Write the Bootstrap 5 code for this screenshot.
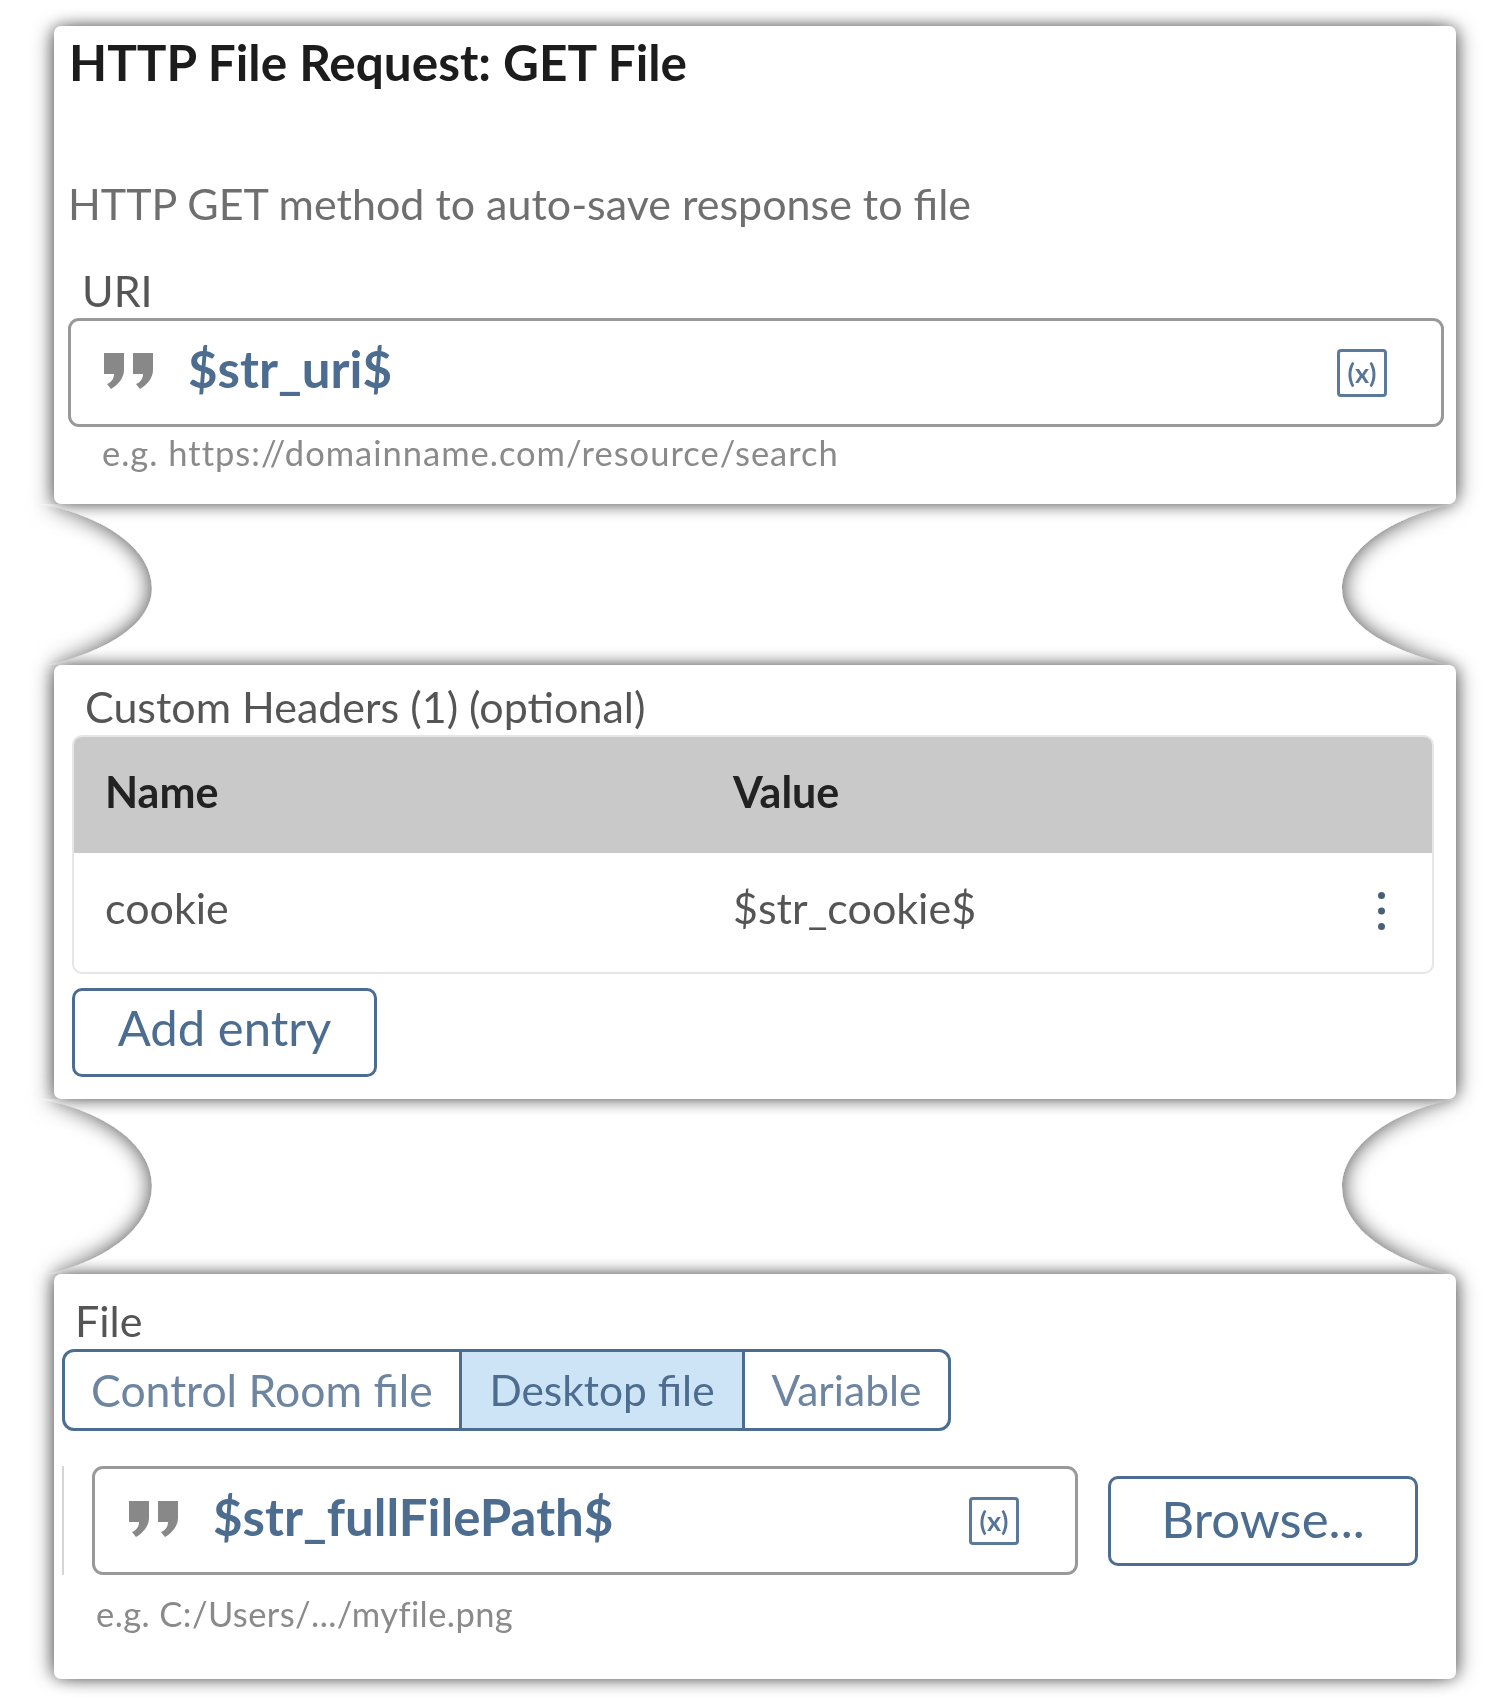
<!DOCTYPE html>
<html lang="en">
<head>
<meta charset="utf-8">
<title>HTTP File Request</title>
<link href="https://cdn.jsdelivr.net/npm/bootstrap@5.3.0/dist/css/bootstrap.min.css" rel="stylesheet">
<style>
html,body{background:#fff;margin:0}
body{font-family:Lato,"Open Sans",sans-serif;padding-top:26px;height:1703px;overflow:hidden;color:#555}
.sheet{position:relative;z-index:2;background:#fff;margin-left:54px;width:1402px;border-radius:7px;box-shadow:0 0 14px rgba(0,0,0,.24),7px 0 20px -4px rgba(0,0,0,.46),-7px 0 20px -4px rgba(0,0,0,.46)}
.sheet>*{filter:blur(.45px)}
.sheet-a{height:478px;padding:10px 12px 0 14px}
.sheet-b{height:434px;padding:19px 22px 0 18px}
.sheet-c{height:405px;padding:24px 38px 0 8px}
.tear{display:block;width:1494px;height:161px;overflow:visible;position:relative;z-index:1}
.ttl{font-size:49.5px;line-height:52px;font-weight:700;color:#1c1c1c;margin:0 0 0 1px}
.sub{font-size:43px;line-height:46px;color:#6f6f6f;margin:93px 0 0;font-weight:400}
.lbl{font-size:43px;line-height:46px;color:#555;margin:0}
.fld{height:109px;border:3px solid #999;border-radius:11px;background:#fff}
.val{font-size:51px;font-weight:700;color:#4d6d90;line-height:56px;padding-bottom:8px}
.qmark{width:50px;height:36px;fill:#888;flex:none;margin-top:-4px}
.xbox{width:50px;height:48px;border:3px solid #5b7a9b;border-radius:4px;font-size:27px;font-weight:700;color:#567596;line-height:1;flex:none}
.hint{font-size:34.5px;line-height:40px;color:#8a8a8a;margin:0}
.hint-a{letter-spacing:1px}
.hint-b{letter-spacing:.42px}
.grid-wrap{border:2px solid #e6e6e6;border-radius:10px;overflow:hidden;height:239px}
.grid-wrap .table{--bs-table-bg:transparent;margin:0;font-size:43px;table-layout:fixed}
.grid-wrap th{background:#c9c9c9;color:#222;font-weight:700;height:116px;padding:0 0 6px 31px;vertical-align:middle;border:0}
.grid-wrap td{color:#555;height:119px;padding:0 0 8px 31px;vertical-align:middle;border:0}
.col-nm{width:628px}
.col-end{width:110px}
.dots{width:7px;height:38px;fill:#4a5f78;display:block;margin-left:25px;margin-top:4px}
.btn-line{--bs-btn-color:#4d6d90;--bs-btn-border-color:#4d6d90;--bs-btn-border-width:3px;--bs-btn-padding-x:0;--bs-btn-padding-y:0;--bs-btn-border-radius:10px;--bs-btn-line-height:1;background:#fff;color:#4d6d90;display:flex;align-items:center;justify-content:center}
.btn-add{width:305px;height:89px;font-size:49px;padding-bottom:10px}
.btn-browse{width:310px;height:90px;font-size:51px;padding-bottom:4px}
.seg{height:82px;border:3px solid #4d6d90;border-radius:12px;overflow:hidden;width:889px;font-size:42.5px;color:#6d85a0}
.seg-it{height:100%;border-right:3px solid #4d6d90;display:flex;align-items:center;justify-content:center}
.seg-it:last-child{border-right:0}
.seg-a{width:397px;font-size:44.5px}
.seg-b{width:283px;background:#cde4f6;color:#4d6d90}
.seg-c{flex:1}
.rail{border-left:2px solid #d5d5d5;height:109px;padding-left:28px}
</style>
</head>
<body>
<section class="sheet sheet-a">
  <h1 class="ttl">HTTP File Request: GET File</h1>
  <p class="sub">HTTP GET method to auto-save response to file</p>
  <p class="lbl" style="padding-left:14px;margin-top:41px;margin-bottom:4px">URI</p>
  <div class="fld d-flex align-items-center" style="padding:0 54px 0 33px">
    <svg class="qmark" viewBox="0 0 50 36"><path d="M0 0H20V17C20 25 14 32 7 36L3 31C8 29 10 25 10 21H0Z"/><path d="M29 0H49V17C49 25 43 32 36 36L32 31C37 29 39 25 39 21H29Z"/></svg>
    <span class="val flex-grow-1" style="padding-left:34px">$str_uri$</span>
    <span class="xbox d-flex align-items-center justify-content-center">(x)</span>
  </div>
  <p class="hint hint-a" style="padding-left:34px;margin-top:6px">e.g. https://domainname.com/resource/search</p>
</section>

<svg class="tear" viewBox="0 0 1494 161" aria-hidden="true">
  <defs><filter id="soft" x="-10%" y="-30%" width="120%" height="160%"><feDropShadow dx="0" dy="0" stdDeviation="11" flood-color="#000" flood-opacity=".72"/></filter></defs>
  <path filter="url(#soft)" fill="#fff" d="M40 0C105 12 152 45 152 84C152 121 105 148 48 161H1450C1395 148 1342 123 1342 85C1342 47 1390 12 1456 0Z"/>
</svg>

<section class="sheet sheet-b">
  <p class="lbl" style="padding-left:13px;margin-bottom:5px">Custom Headers (1) (optional)</p>
  <div class="grid-wrap">
    <table class="table">
      <thead><tr><th class="col-nm">Name</th><th>Value</th><th class="col-end"></th></tr></thead>
      <tbody><tr><td>cookie</td><td>$str_cookie$</td><td><svg class="dots" viewBox="0 0 7 38"><circle cx="3.5" cy="3.5" r="3.5"/><circle cx="3.5" cy="19" r="3.5"/><circle cx="3.5" cy="34.5" r="3.5"/></svg></td></tr></tbody>
    </table>
  </div>
  <button type="button" class="btn btn-line btn-add" style="margin-top:14px">Add entry</button>
</section>

<svg class="tear" style="height:175px" viewBox="0 0 1494 175" aria-hidden="true">
  <path filter="url(#soft)" fill="#fff" d="M40 0C105 12 152 46 152 86C152 130 105 162 48 175H1450C1395 162 1342 132 1342 88C1342 48 1390 12 1456 0Z"/>
</svg>

<section class="sheet sheet-c">
  <p class="lbl" style="padding-left:13px;margin-bottom:5px">File</p>
  <div class="seg d-flex">
    <div class="seg-it seg-a">Control Room file</div>
    <div class="seg-it seg-b">Desktop file</div>
    <div class="seg-it seg-c">Variable</div>
  </div>
  <div class="d-flex align-items-center" style="margin-top:35px">
    <div class="rail">
      <div class="fld d-flex align-items-center" style="width:986px;padding:0 56px 0 34px">
        <svg class="qmark" viewBox="0 0 50 36"><path d="M0 0H20V17C20 25 14 32 7 36L3 31C8 29 10 25 10 21H0Z"/><path d="M29 0H49V17C49 25 43 32 36 36L32 31C37 29 39 25 39 21H29Z"/></svg>
        <span class="val flex-grow-1" style="padding-left:34px">$str_fullFilePath$</span>
        <span class="xbox d-flex align-items-center justify-content-center">(x)</span>
      </div>
    </div>
    <button type="button" class="btn btn-line btn-browse" style="margin-left:30px">Browse...</button>
  </div>
  <p class="hint hint-b" style="padding-left:34px;margin-top:19px">e.g. C:/Users/.../myfile.png</p>
</section>
<script src="https://cdn.jsdelivr.net/npm/bootstrap@5.3.0/dist/js/bootstrap.bundle.min.js"></script>
</body>
</html>
